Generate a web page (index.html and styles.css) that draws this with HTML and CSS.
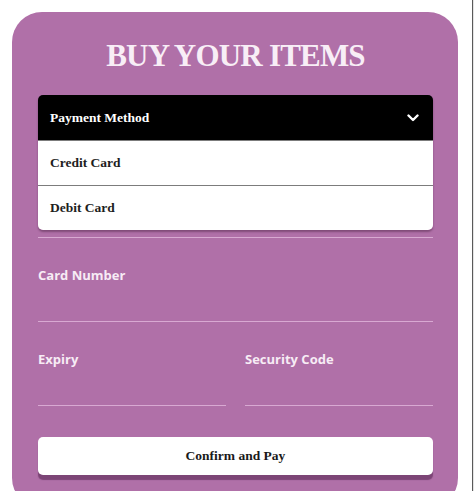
FILE: index.html
```html
<!DOCTYPE html>
<html lang="en">
<head>
<meta charset="utf-8">
<title>Buy Your Items</title>
<link rel="stylesheet" href="styles.css">
</head>
<body>
<div class="page">
  <form class="card">
    <h1 class="title">BUY YOUR ITEMS</h1>
    <div class="dropdown">
      <div class="dropdown-head">
        <span>Payment Method</span>
        <svg class="chevron" width="12" height="8" viewBox="0 0 12 8" aria-hidden="true">
          <path d="M1.5 1.5 L6 6 L10.5 1.5" fill="none" stroke="#fff" stroke-width="2.4" stroke-linecap="round" stroke-linejoin="round"/>
        </svg>
      </div>
      <div class="option">Credit Card</div>
      <div class="option">Debit Card</div>
    </div>
    <div class="divider"></div>
    <div class="field">
      <label class="label">Card Number</label>
      <div class="input"></div>
    </div>
    <div class="row">
      <div class="field">
        <label class="label">Expiry</label>
        <div class="input"></div>
      </div>
      <div class="field">
        <label class="label">Security Code</label>
        <div class="input"></div>
      </div>
    </div>
    <button type="button" class="pay">Confirm and Pay</button>
  </form>
</div>
<div class="edge"></div>
</body>
</html>
```
FILE: styles.css
```css
html, body {
  margin: 0;
  padding: 0;
  background: #ffffff;
}

.page {
  width: 446px;
  padding: 12px 0 0 12px;
}

.card {
  display: block;
  background: #b070a8;
  border-radius: 30px;
  padding: 24px 25px 33px 26px;
}

.title {
  margin: 0 0 19px;
  font-family: "Liberation Serif", "Times New Roman", serif;
  font-weight: 700;
  font-size: 31px;
  line-height: 40px;
  letter-spacing: -0.8px;
  text-align: center;
  color: #f8eef6;
}

.dropdown {
  border-radius: 5px;
  overflow: hidden;
  box-shadow: 0 2px 2px rgba(70, 30, 65, 0.45);
  font-family: "Liberation Serif", "Times New Roman", serif;
  font-weight: 700;
  font-size: 13.5px;
}

.dropdown-head {
  height: 45px;
  background: #000000;
  color: #ffffff;
  display: flex;
  align-items: center;
  justify-content: space-between;
  padding: 0 14px 0 12px;
}

.chevron {
  display: block;
}

.option {
  height: 44px;
  display: flex;
  align-items: center;
  padding: 0 12px;
  background: #ffffff;
  color: #1e1e1e;
  border-top: 1px solid #7c7c7c;
}

.divider {
  margin-top: 7px;
  height: 1px;
  background: #d8a9d2;
}

.field {
  padding-top: 28px;
}

.label {
  display: block;
  font-family: "Open Sans", "Liberation Sans", sans-serif;
  font-weight: 700;
  font-size: 13px;
  color: #f7ecf5;
}

.input {
  height: 37px;
  border-bottom: 1px solid #d8a9d2;
}

.row {
  display: grid;
  grid-template-columns: 1fr 1fr;
  column-gap: 19px;
}

.pay {
  display: block;
  width: 100%;
  height: 38px;
  margin-top: 31px;
  border: none;
  border-radius: 5px;
  background: #ffffff;
  color: #1a1a1a;
  font-family: "Liberation Serif", "Times New Roman", serif;
  font-weight: 700;
  font-size: 13.5px;
  box-shadow: 0 5px 1px rgba(90, 40, 85, 0.6);
  cursor: pointer;
}

.edge {
  position: fixed;
  top: 0;
  right: 0;
  width: 1px;
  height: 100%;
  background: #e4e4e4;
  border-left: 1px solid #5a5a5a;
}
```
